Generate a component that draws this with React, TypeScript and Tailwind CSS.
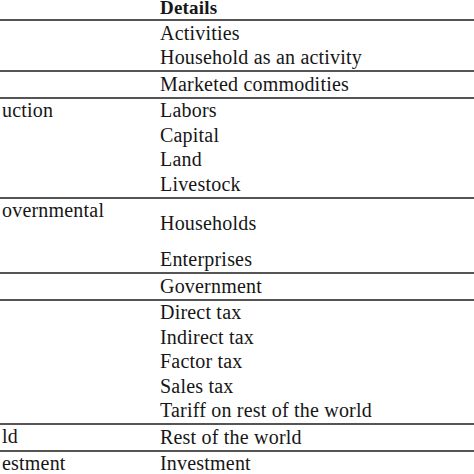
const sections: { left?: string; rows: { text: string; tall?: boolean }[] }[] = [
  { rows: [{ text: "Activities" }, { text: "Household as an activity" }] },
  { rows: [{ text: "Marketed commodities" }] },
  { left: "uction", rows: [{ text: "Labors" }, { text: "Capital" }, { text: "Land" }, { text: "Livestock" }] },
  { left: "overnmental", rows: [{ text: "Households", tall: true }, { text: "Enterprises" }] },
  { rows: [{ text: "Government" }] },
  {
    rows: [
      { text: "Direct tax" },
      { text: "Indirect tax" },
      { text: "Factor tax" },
      { text: "Sales tax" },
      { text: "Tariff on rest of the world" },
    ],
  },
  { left: "ld", rows: [{ text: "Rest of the world" }] },
  { left: "estment", rows: [{ text: "Investment" }] },
];

export default function App() {
  return (
    <div className="w-[474px] h-[474px] overflow-hidden bg-white text-[#161616] font-['Liberation_Serif',serif] text-[20px] tracking-[0.2px]">
      <div className="grid grid-cols-[160px_1fr] h-[19px]">
        <div />
        <div className="font-bold text-[19px] leading-[15px]">Details</div>
      </div>
      {sections.map((s, i) => (
        <div key={i} className="grid grid-cols-[160px_1fr] border-t-2 border-[#555]">
          <div className="pl-[2px]">
            {s.left && <div className="h-[24.5px] flex items-center leading-none pb-[2px]">{s.left}</div>}
          </div>
          <div className="flex flex-col">
            {s.rows.map((r) => (
              <div
                key={r.text}
                className={`${r.tall ? "h-[49px]" : "h-[24.5px]"} flex items-center leading-none pb-[1px]`}
              >
                {r.text}
              </div>
            ))}
          </div>
        </div>
      ))}
    </div>
  );
}
